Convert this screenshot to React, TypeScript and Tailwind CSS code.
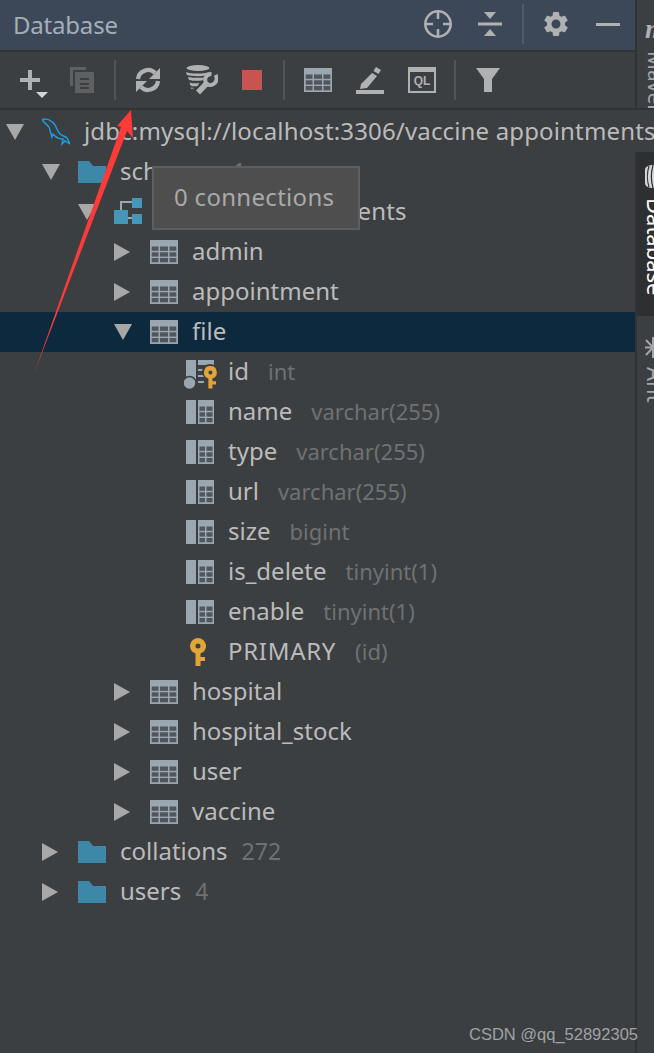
import { MdSettings } from 'react-icons/md';

// Database tool window, IntelliJ Darcula look

const ICON = '#afb1b3';
const TABLE = '#9aa7b0';
const FOLDER = '#3d88a8';
const CELL = '#50565b';

const TableIcon = () => (
  <svg width="28" height="24" viewBox="0 0 28 24">
    <rect x="0" y="0" width="28" height="24" fill={TABLE} />
    {[6.5, 12.3, 18].map((y) => (
      <g key={y} fill={CELL}>
        <rect x="1.700" y={y} width="6.800" height="4.300" />
        <rect x="10" y={y} width="8" height="4.300" />
        <rect x="19.500" y={y} width="6.800" height="4.300" />
      </g>
    ))}
  </svg>
);

const ColumnIcon = () => (
  <svg width="28" height="24" viewBox="0 0 28 24">
    <rect x="0" y="0" width="10" height="24" fill={TABLE} />
    <rect x="12" y="0" width="16" height="24" fill={TABLE} />
    {[6.5, 12.3, 18].map((y) => (
      <g key={y} fill={CELL}>
        <rect x="13.500" y={y} width="5.500" height="4.300" />
        <rect x="20.500" y={y} width="6" height="4.300" />
      </g>
    ))}
  </svg>
);

const KeyShape = ({ x = 0, y = 0 }: { x?: number; y?: number }) => (
  <g transform={`translate(${x} ${y})`}>
    <path
      fillRule="evenodd"
      fill="#e2a53a"
      d="M8 0a8 8 0 0 1 2.500 15.600V19H15v4h-4.500v5H5.500V15.600A8 8 0 0 1 8 0zm0 5.500a2.500 2.500 0 1 0 0 5 2.500 2.500 0 0 0 0-5z"
    />
  </g>
);

const KeyIcon = () => (
  <svg width="28" height="28" viewBox="0 0 28 28">
    <KeyShape x={4} y={0} />
  </svg>
);

const PkColumnIcon = () => (
  <svg width="34" height="34" viewBox="0 0 34 34" className="-ml-[2px] shrink-0">
    <rect x="2" y="5" width="10" height="20" fill={TABLE} />
    <circle cx="5.500" cy="28" r="6.500" fill={TABLE} stroke="#3c3f41" strokeWidth="1.500" />
    <rect x="14" y="5" width="16" height="5" fill={TABLE} />
    <rect x="14" y="14" width="6" height="2" fill={TABLE} />
    <rect x="14" y="20" width="6" height="2" fill={TABLE} />
    <rect x="14" y="26" width="6" height="2" fill={TABLE} />
    <circle cx="26" cy="17" r="8" fill="#3c3f41" />
    <g transform="translate(20 11) scale(0.8)">
      <KeyShape />
    </g>
  </svg>
);

const FolderIcon = () => (
  <svg width="28" height="22" viewBox="0 0 28 22">
    <path d="M0 0h11l4 5h13v17H0z" fill={FOLDER} />
  </svg>
);

const SchemaIcon = () => (
  <svg width="28" height="26" viewBox="0 0 28 26" className="-mt-[2px]">
    <path d="M7 12V4h11M14 20h4" fill="none" stroke={TABLE} strokeWidth="2" />
    <rect x="0" y="12" width="14" height="14" fill="#4596b8" />
    <rect x="18" y="0" width="10" height="10" fill="#4596b8" />
    <rect x="18" y="16" width="10" height="10" fill="#4596b8" />
  </svg>
);

const DolphinIcon = () => (
  <svg width="28" height="28" viewBox="0 0 28 28" fill="none" stroke="#1ba1e2" strokeWidth="1.400">
    <path d="M0.500 1.500C5 0 10 3 13 7c2 4 3 7 5 9 2 2 5 2 7 4l3 6-5-3-3 3 1-5c-3 0-6-1-8-3l-2-2-1 3-1-3c-1-3-1-5-2-7L1 3z" />
  </svg>
);

const Caret = ({ open }: { open: boolean }) => (
  <svg width="18" height="18" viewBox="0 0 18 18">
    {open ? <path d="M0 1h18L9 17z" fill="#a8a8a8" /> : <path d="M0 0l16 9L0 18z" fill="#a8a8a8" />}
  </svg>
);

type RowProps = {
  depth: number;
  caret?: 'open' | 'closed';
  icon: React.ReactNode;
  label: string;
  labelClass?: string;
  hint?: string;
  count?: boolean;
  selected?: boolean;
};

const Row = ({ depth, caret, icon, label, labelClass, hint, count, selected }: RowProps) => (
  <div
    className={`flex h-10 items-center whitespace-nowrap ${selected ? 'bg-[#0d293e]' : ''}`}
    style={{ paddingLeft: 6 + depth * 36 }}
  >
    <span className="flex w-9 shrink-0 items-center">{caret && <Caret open={caret === 'open'} />}</span>
    <span className="flex h-7 w-7 shrink-0 items-center justify-start">{icon}</span>
    <span className={`mb-[2px] ml-[14px] text-[#bbbbbb] ${labelClass ?? ''}`}>{label}</span>
    {hint && (
      <span className={`mb-[2px] text-[#6f7173] ${count ? 'ml-[14px] text-[23px]' : 'ml-[19px] text-[22px]'}`}>{hint}</span>
    )}
  </div>
);

const ToolSep = ({ className }: { className: string }) => (
  <span className={`h-10 w-[2px] shrink-0 bg-[#515355] ${className}`} />
);

const App = () => {
  return (
    <div className="relative flex h-[1053px] w-[654px] flex-col overflow-hidden bg-[#3c3f41] font-['Noto_Sans',sans-serif] text-[24px]">
      <div className="flex h-[110px] shrink-0">
        <div className="flex w-[635px] shrink-0 flex-col">
          {/* title bar */}
          <div className="flex h-[50px] items-center bg-[#3c4858] pl-[13px]">
            <span className="tracking-[-0.2px] text-[#a4aeb8]">Database</span>
            <div className="-mt-[2px] ml-auto flex items-center">
              <svg width="28" height="28" viewBox="0 0 28 28" fill="none" stroke={ICON} strokeWidth="2.500">
                <circle cx="14" cy="14" r="12.700" />
                <path d="M14 1v8M14 19v8M1 14h8M19 14h8" />
              </svg>
              <svg className="ml-[26px]" width="24" height="24" viewBox="0 0 24 24">
                <path d="M0 10.500h24v3H0z M6 0h12l-6 7z M6 24h12l-6-7z" fill={ICON} />
              </svg>
              <span className="ml-[20px] mr-[17px] h-10 w-[2px] bg-[#515b67]" />
              <MdSettings className="size-[30px]" color={ICON} />
              <span className="ml-[25px] mr-[15px] h-[3px] w-[24px] bg-[#afb1b3]" />
            </div>
          </div>
          {/* toolbar */}
          <div className="flex h-[60px] items-center border-y-2 border-[#313335] pl-[20px]">
            <span className="relative flex h-6 w-[20px] shrink-0 items-center">
              <svg width="20" height="20" viewBox="0 0 20 20">
                <path d="M8 0h4v8h8v4h-8v8H8v-8H0V8h8z" fill={ICON} />
              </svg>
              <svg className="absolute left-[16px] top-[24px]" width="12" height="6" viewBox="0 0 12 6">
                <path d="M0 0h12L6 6z" fill="#d4d4d4" />
              </svg>
            </span>
            <svg className="ml-[30px]" width="24" height="26" viewBox="0 0 24 26" fill="#5e6062">
              <path d="M0 0h16v3H3v16H0z" />
              <path fillRule="evenodd" d="M5 5h19v21H5zM10 11v2h9v-2zM10 16v2h9v-2zM10 20v2h9v-2z" />
            </svg>
            <ToolSep className="ml-[20px]" />
            <svg className="ml-[19px]" width="26" height="26" viewBox="0 0 26 26" fill="none" stroke={ICON} strokeWidth="4.200">
              <path d="M3 12A10 10 0 0 1 20 6" />
              <path d="M23 14A10 10 0 0 1 6 20" />
              <path d="M25 1v11H14z" fill={ICON} stroke="none" />
              <path d="M1 25V14h11z" fill={ICON} stroke="none" />
            </svg>
            <svg className="ml-[25px]" width="32" height="30" viewBox="0 0 32 30" fill={ICON}>
              <ellipse cx="12" cy="3" rx="11.500" ry="3" />
              <path d="M0 7c5 2 18 2 23 0l-1 3c-3 1.500-17 1.500-21 0zM2 12c4 1 13 1 17 .5l-3 3c-3 .5-9 .5-13-.500zM3.500 17.500c3 1 7 1 10 .5l-2 3c-2 .5-5 .5-7-.500zM4.500 22.500l4 .5-3 1z" />
              <path d="M12 28L22 17" stroke="#3c3f41" strokeWidth="10" fill="none" />
              <path d="M12 27.500L22 17" stroke={ICON} strokeWidth="5.500" fill="none" />
              <path d="M29.500 10a6.500 6.500 0 0 1-9 9" stroke={ICON} strokeWidth="4" fill="none" />
              <path d="M25.500 9a6 6 0 0 0-6 8" stroke={ICON} strokeWidth="4" fill="none" />
            </svg>
            <span className="ml-[24px] h-5 w-5 shrink-0 bg-[#c75450]" />
            <ToolSep className="ml-[21px]" />
            <span className="ml-[19px] flex">
              <TableIcon />
            </span>
            <svg className="ml-[24px]" width="28" height="28" viewBox="0 0 28 28" fill={ICON}>
              <path d="M20 1l5 3-2.500 4-5-3zM16 7l5 3-10 12-7 1 1-5z" />
              <rect x="0" y="24" width="28" height="4" />
            </svg>
            <span className="ml-[24px] flex h-[26px] w-[28px] shrink-0 flex-col border-2 border-[#afb1b3]">
              <span className="h-[3px] bg-[#afb1b3]" />
              <span className="flex-1 text-center font-['Liberation_Sans',sans-serif] text-[12px] font-bold leading-[18px] text-[#afb1b3]">
                QL
              </span>
            </span>
            <ToolSep className="ml-[18px]" />
            <svg className="ml-[20px]" width="24" height="24" viewBox="0 0 24 24">
              <path d="M0 0h24l-8 11v13H8V11z" fill={ICON} />
            </svg>
          </div>
        </div>
        {/* right strip, top */}
        <div className="flex flex-1 flex-col overflow-hidden border-b-2 border-l-2 border-[#313335] pl-[8px] pt-[16px]">
          <span className="font-['Liberation_Serif',serif] text-[28px] font-bold italic leading-[26px] text-[#afb1b3]">m</span>
          <span className="mt-[9px] self-start text-[21px] leading-none text-[#a4a6a8] [writing-mode:vertical-rl]">
            Maven
          </span>
        </div>
      </div>

      <div className="flex flex-1">
        <div className="w-[635px] shrink-0 pt-[2px]">
          <Row
            depth={0}
            caret="open"
            icon={<DolphinIcon />}
            label="jdbc:mysql://localhost:3306/vaccine appointments"
            labelClass="tracking-[0.15px]"
          />
          <Row depth={1} caret="open" icon={<FolderIcon />} label="schemas" hint="1" count />
          <Row depth={2} caret="open" icon={<SchemaIcon />} label="vaccine appointments" labelClass="tracking-[0.15px]" />
          <Row depth={3} caret="closed" icon={<TableIcon />} label="admin" />
          <Row depth={3} caret="closed" icon={<TableIcon />} label="appointment" />
          <Row depth={3} caret="open" icon={<TableIcon />} label="file" selected />
          <Row depth={4} icon={<PkColumnIcon />} label="id" hint="int" />
          <Row depth={4} icon={<ColumnIcon />} label="name" hint="varchar(255)" />
          <Row depth={4} icon={<ColumnIcon />} label="type" hint="varchar(255)" />
          <Row depth={4} icon={<ColumnIcon />} label="url" hint="varchar(255)" />
          <Row depth={4} icon={<ColumnIcon />} label="size" hint="bigint" />
          <Row depth={4} icon={<ColumnIcon />} label="is_delete" hint="tinyint(1)" />
          <Row depth={4} icon={<ColumnIcon />} label="enable" hint="tinyint(1)" />
          <Row depth={4} icon={<KeyIcon />} label="PRIMARY" labelClass="tracking-[0.7px]" hint="(id)" />
          <Row depth={3} caret="closed" icon={<TableIcon />} label="hospital" />
          <Row depth={3} caret="closed" icon={<TableIcon />} label="hospital_stock" />
          <Row depth={3} caret="closed" icon={<TableIcon />} label="user" />
          <Row depth={3} caret="closed" icon={<TableIcon />} label="vaccine" />
          <Row depth={1} caret="closed" icon={<FolderIcon />} label="collations" hint="272" count />
          <Row depth={1} caret="closed" icon={<FolderIcon />} label="users" hint="4" count />
        </div>
        {/* right strip, lower tabs */}
        <div className="mt-[42px] flex-1 overflow-hidden border-l-2 border-[#313335]">
          <div className="flex h-[164px] flex-col bg-[#2d2f30] pl-[8px] pt-[13px]">
            <svg className="shrink-0" width="18" height="23" viewBox="0 0 18 23" fill="#d6d6d6">
              <path d="M0 5c0-3 3-5 9-5s9 2 9 5v13c0 3-3 5-9 5s-9-2-9-5z" />
              <path d="M4 1c-2 6-2 15 0 21M8 0c-2 7-2 16 0 23" stroke="#2d2f30" strokeWidth="1.200" fill="none" />
            </svg>
            <span className="mt-[10px] self-start text-[22px] leading-none text-white [writing-mode:vertical-rl]">
              Database
            </span>
          </div>
          <div className="flex flex-col pl-[8px] pt-[21px]">
            <svg className="shrink-0" width="16" height="21" viewBox="0 0 16 21" stroke="#a4a6a8" strokeWidth="2" fill="none">
              <path d="M8 0v21M0 10.500h16M1 3l14 15M1 18L15 3" />
            </svg>
            <span className="mt-[9px] self-start text-[22px] leading-none text-[#a4a6a8] [writing-mode:vertical-rl]">
              Ant
            </span>
          </div>
        </div>
      </div>

      {/* tooltip */}
      <div className="absolute left-[152px] top-[166px] flex h-[64px] w-[208px] items-center border-2 border-[#5c5e60] bg-[#4d4e4d] pb-[3px] pl-[20px] tracking-[0.3px] text-[#a8aaab]">
        0 connections
      </div>

      {/* red annotation arrow */}
      <svg className="absolute left-0 top-0" width="654" height="400" viewBox="0 0 654 400">
        <path d="M34 374L121 127L117 126L131 110L133 138L127 131z" fill="#fc3a3a" />
      </svg>

      {/* watermark */}
      <span className="absolute right-[16px] top-[1026px] font-['Liberation_Sans',sans-serif] text-[16.5px] leading-none text-[#a0a2a4]">
        CSDN @qq_52892305
      </span>
    </div>
  );
};

export default App;
